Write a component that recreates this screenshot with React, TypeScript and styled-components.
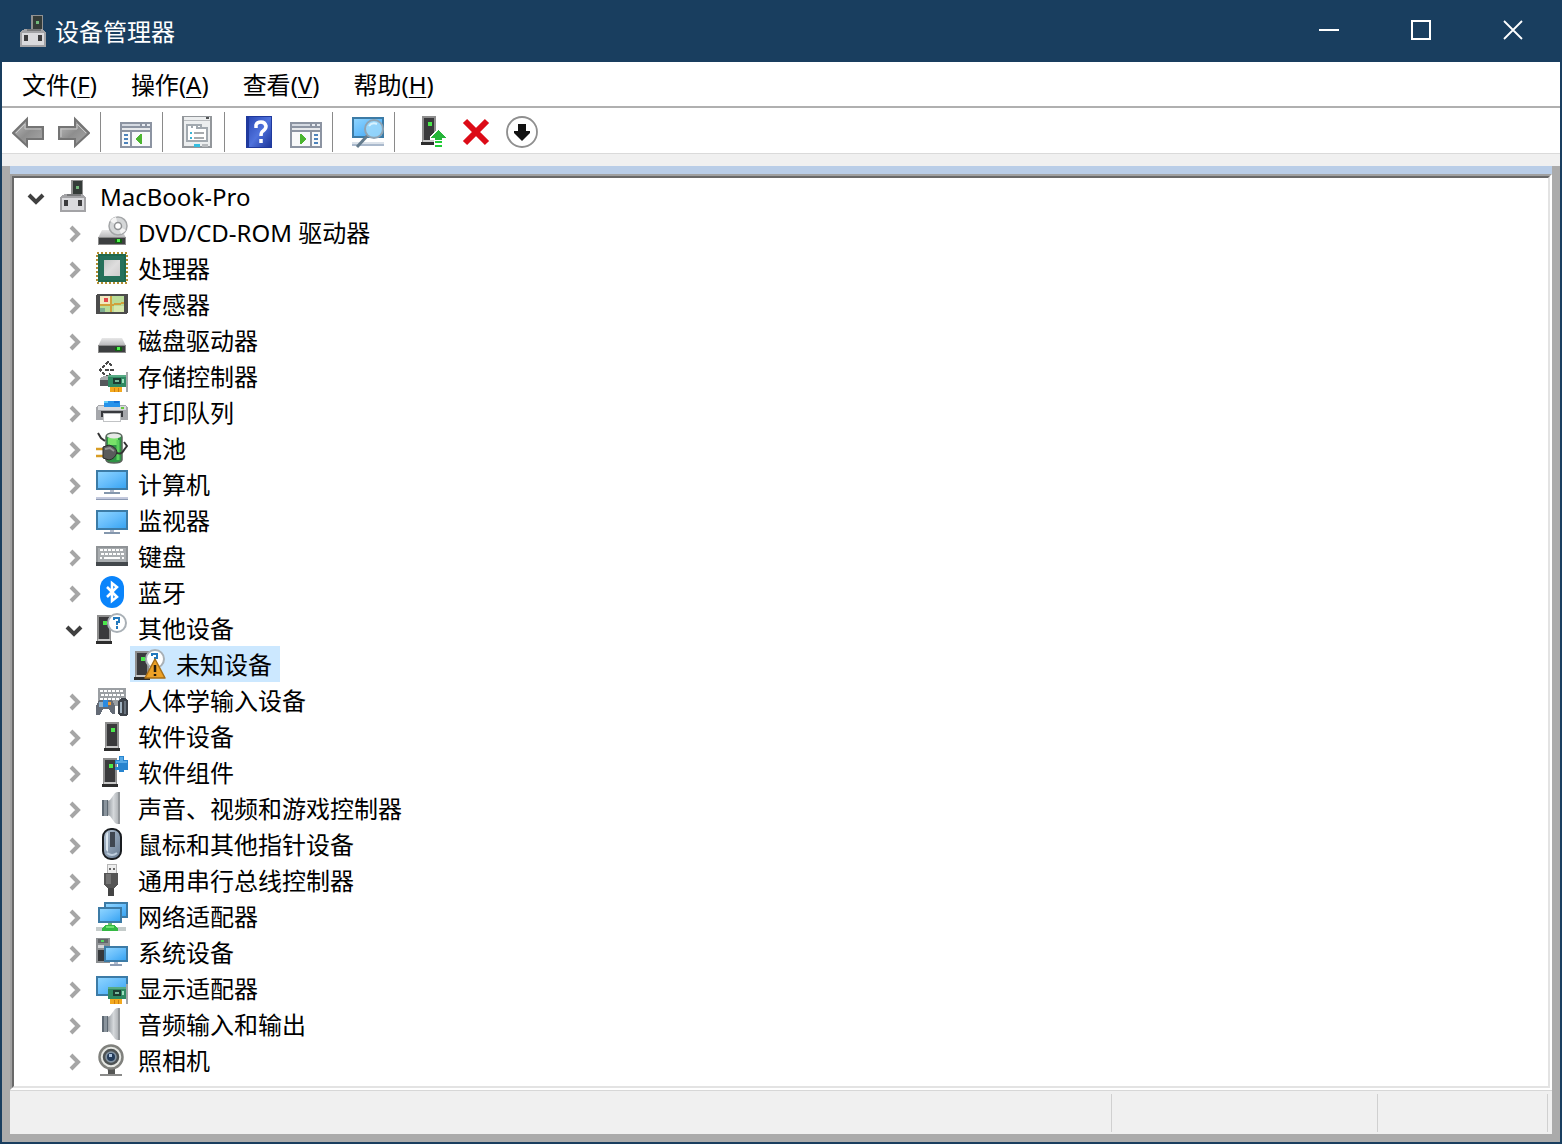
import React, { useState } from "react";
import styled, { createGlobalStyle } from "styled-components";

const GlobalStyle = createGlobalStyle`
  * { box-sizing: border-box; }
  body { margin: 0; background: #193e5f; }
  button { font: inherit; color: inherit; border: 0; background: none; padding: 0; margin: 0; }
`;

const Frame = styled.div`
  display: flex;
  flex-direction: column;
  min-height: 100vh;
  padding: 0 2px 2px;
  background: #193e5f;
  color: #000;
  font-family: "Noto Sans", "Noto Sans CJK SC", sans-serif;
  font-size: 24px;
  line-height: 34px;
`;

const TitleBar = styled.header`
  display: flex;
  align-items: center;
  gap: 5px;
  height: 62px;
  padding: 0 1px 0 16px;
  color: #fff;
`;

const Title = styled.h1`
  flex: 1;
  margin: 0;
  padding-top: 2px;
  font-size: 24px;
  font-weight: 400;
`;

const WindowControls = styled.div`
  display: flex;
  align-self: stretch;
`;

const WindowButton = styled.button`
  display: grid;
  place-items: center;
  width: 92px;
  height: 60px;
  &:hover { background: #31587b; }
`;

const MenuBar = styled.nav`
  display: flex;
  height: 46px;
  padding-left: 3px;
  background: #fff;
  border-bottom: 2px solid #b0b0b0;
`;

const MenuButton = styled.button`
  padding: 2px 17px 0;
  &:hover { background: #e5f3ff; }
`;

const AccessKey = styled.span`
  text-decoration: underline;
  text-decoration-thickness: 1px;
  text-underline-offset: 3px;
`;

const ToolBar = styled.div`
  display: flex;
  padding: 4px 3px 1px;
  background: #fff;
  border-bottom: 1px solid #dadada;
`;

const ToolButton = styled.button`
  display: grid;
  place-items: center;
  width: 46px;
  height: 40px;
  &:hover { background: #e5f3ff; }
`;

const Divider = styled.span`
  width: 1px;
  margin: 0 12px 0 3px;
  background: #8a8a8a;
`;

const Workspace = styled.div`
  display: flex;
  flex: 1;
  flex-direction: column;
  padding-top: 12px;
  background: #f0f0f0;
`;

const Client = styled.div`
  display: flex;
  flex: 1;
  flex-direction: column;
  border: solid #ababab;
  border-width: 0 8px 8px;
`;

const Caption = styled.div`
  height: 8px;
  background: #b9cde7;
`;

const OuterEdge = styled.main`
  display: flex;
  flex: 1;
  border: 2px solid;
  border-color: #a0a0a0 #fff #fff #a0a0a0;
`;

const TreePane = styled.div`
  flex: 1;
  padding-bottom: 8px;
  background: #fff;
  border: 2px solid;
  border-color: #696969 #e3e3e3 #e3e3e3 #696969;
`;

const Branch = styled.ul`
  margin: 0;
  padding: 0;
  list-style: none;
`;

const Row = styled.div<{ $level: number }>`
  display: flex;
  gap: 4px;
  height: 36px;
  padding-left: ${(p) => p.$level * 38 + 8}px;
`;

const Toggle = styled.button`
  display: grid;
  place-items: center;
  width: 28px;
  padding-top: 4px;
`;

const ToggleSpace = styled.span`
  width: 28px;
`;

const NodeButton = styled.button<{ $selected: boolean }>`
  display: flex;
  align-items: center;
  gap: 10px;
  padding: 0 8px 0 4px;
  white-space: nowrap;
  background: ${(p) => (p.$selected ? "#cce8ff" : "transparent")};
`;

const NodeLabel = styled.span`
  padding-top: 2px;
`;

const StatusBar = styled.footer`
  display: grid;
  grid-template-columns: 1fr 266px 170px;
  height: 44px;
  padding: 3px 4px 2px 0;
  background: #f0f0f0;
  border-top: 1px solid #d7d7d7;
`;

const StatusCell = styled.span`
  border-right: 1px solid #d0d0d0;
`;

const Svg = styled.svg`
  display: block;
  flex: none;
`;

const Defs = styled.svg`
  position: absolute;
`;

const Icon = ({ children, smooth }: { children: React.ReactNode; smooth?: boolean }) => (
  <Svg width="32" height="32" viewBox="0 0 32 32" shapeRendering={smooth ? "auto" : "crispEdges"} aria-hidden="true">
    {children}
  </Svg>
);

const Gradients = () => (
  <Defs width="0" height="0" aria-hidden="true">
    <defs>
      <linearGradient id="screen" x1="0" y1="0" x2="1" y2="1">
        <stop offset="0" stopColor="#8dd4ff" />
        <stop offset="0.5" stopColor="#66bdfb" />
        <stop offset="1" stopColor="#38a4f2" />
      </linearGradient>
      <linearGradient id="metal" x1="0" y1="0" x2="0" y2="1">
        <stop offset="0" stopColor="#e8e8e8" />
        <stop offset="1" stopColor="#b4b4b6" />
      </linearGradient>
      <linearGradient id="die" x1="0" y1="0" x2="1" y2="1">
        <stop offset="0" stopColor="#c4c6c5" />
        <stop offset="0.5" stopColor="#dedddd" />
        <stop offset="1" stopColor="#cfcdcd" />
      </linearGradient>
      <linearGradient id="arrow" x1="0" y1="0" x2="1" y2="1">
        <stop offset="0" stopColor="#c2c2c2" />
        <stop offset="0.5" stopColor="#8e8e8e" />
        <stop offset="1" stopColor="#a9a9a9" />
      </linearGradient>
      <linearGradient id="cone" x1="0" y1="0" x2="1" y2="0">
        <stop offset="0" stopColor="#8f959b" />
        <stop offset="0.5" stopColor="#d5d8db" />
        <stop offset="1" stopColor="#a3a7ab" />
      </linearGradient>
      <linearGradient id="help" x1="0" y1="0" x2="1" y2="1">
        <stop offset="0" stopColor="#2b49b5" />
        <stop offset="0.5" stopColor="#4f72dc" />
        <stop offset="1" stopColor="#1c369b" />
      </linearGradient>
      <linearGradient id="mouse" x1="0" y1="0" x2="1" y2="1">
        <stop offset="0" stopColor="#b4c3d4" />
        <stop offset="1" stopColor="#64788f" />
      </linearGradient>
    </defs>
  </Defs>
);

const Screen = ({ x = 0, y = 0, w = 32, h = 20 }: { x?: number; y?: number; w?: number; h?: number }) => (
  <>
    <rect x={x} y={y} width={w} height={h} fill="#3c7ba6" />
    <rect x={x + 2} y={y + 2} width={w - 4} height={h - 4} fill="url(#screen)" />
  </>
);

const Tower = ({ x = 0, y = 0, w = 14 }: { x?: number; y?: number; w?: number }) => (
  <>
    <rect x={x} y={y} width={w} height={26} fill="#8e8e8e" />
    <rect x={x + 2} y={y + 2} width={w - 4} height={24} fill="#3a3a3c" />
    <rect x={x + w / 2 - 1} y={y + 6} width={4} height={4} fill="#4be84b" />
    <rect x={x + 1} y={y + 24} width={w - 2} height={2} fill="#c8c8c8" />
    <rect x={x - 1} y={y + 26} width={w + 2} height={3} fill="#2d2d2d" />
  </>
);

const Drive = () => (
  <>
    <path d="M6 14H26L30 22H2Z" fill="url(#metal)" />
    <rect x="2" y="21" width="28" height="8" fill="#8b8b8b" />
    <rect x="3" y="22" width="26" height="6" fill="#3d3f40" />
    <rect x="19" y="23" width="7" height="4" fill="#126012" />
    <rect x="21" y="23" width="3" height="3" fill="#4cf04c" />
  </>
);

const Card = () => (
  <>
    <rect x="30" y="12" width="2" height="20" fill="#a3a6a8" />
    <rect x="12" y="15" width="18" height="12" fill="#2f8a63" />
    <rect x="12" y="15" width="18" height="2" fill="#58ab85" />
    <rect x="17" y="18" width="8" height="6" fill="#1d3c33" />
    <rect x="19" y="20" width="4" height="2" fill="#77b79b" />
    <rect x="26" y="19" width="2" height="4" fill="#9fe0bf" />
    <rect x="14" y="27" width="12" height="5" fill="#f3a81d" />
    <path d="M18 28V32M22 28V32" stroke="#cf7d0d" />
  </>
);

const Bubble = () => (
  <>
    <circle cx="21" cy="11" r="9" fill="#fff" stroke="#a9b0b6" strokeWidth="2" />
    <path d="M18 8V6H23V10H21V13M21 14V17" fill="none" stroke="#2379bd" strokeWidth="2" />
  </>
);

const Keys = ({ x, y, cols, rows }: { x: number; y: number; cols: number; rows: number }) => (
  <>
    {Array.from({ length: cols * rows }, (_, i) => {
      const row = Math.floor(i / cols);
      return <rect key={i} x={x + (i % cols) * 4 + (row % 2)} y={y + row * 4} width="3" height="2" fill="#fff" />;
    })}
  </>
);

const Speaker = () => (
  <Icon smooth>
    <path d="M11 9L14 8L19 1L21 0H24V32H21L19 31L14 24L11 23Z" fill="url(#cone)" />
    <path d="M6 8H12V24H6Z" fill="#5d6872" />
    <path d="M8 8H11V24H8Z" fill="#8a949d" />
    <path d="M22 0H24V32H22Z" fill="#92969a" />
  </Icon>
);

const icons = {
  manager: (
    <Icon>
      <rect x="13" y="0" width="12" height="15" fill="#929292" />
      <rect x="15" y="1" width="9" height="13" fill="#343b38" />
      <rect x="18" y="6" width="3" height="3" fill="#71b97a" />
      <path d="M8 14H24L28 18V32H2V18L4 15Z" fill="#a3a3a6" />
      <path d="M9 14H23V16H9Z" fill="#77787a" />
      <path d="M4 18H26V30H4Z" fill="#dadadd" />
      <rect x="6" y="20" width="4" height="6" fill="#3c3c3e" />
      <rect x="20" y="20" width="4" height="6" fill="#3c3c3e" />
    </Icon>
  ),
  dvd: (
    <Icon smooth>
      <Drive />
      <circle cx="22" cy="10" r="9" fill="#d5d7d8" stroke="#a4a6a8" strokeWidth="1.5" />
      <path d="M22 10L14 5A9 9 0 0 1 20 1ZM22 10L30 14A9 9 0 0 1 25 18Z" fill="#f4f4f4" />
      <circle cx="22" cy="10" r="3.5" fill="#fff" stroke="#909294" strokeWidth="1.5" />
    </Icon>
  ),
  cpu: (
    <Icon>
      <rect x="1" y="1" width="30" height="30" fill="none" stroke="#b28e32" strokeWidth="2" strokeDasharray="2 2" />
      <rect x="2" y="2" width="28" height="28" fill="#1f694e" />
      <rect x="4" y="4" width="24" height="24" fill="#26705a" />
      <rect x="8" y="8" width="16" height="16" fill="url(#die)" />
    </Icon>
  ),
  sensor: (
    <Icon>
      <rect x="0" y="6" width="32" height="20" rx="2" fill="#4c4c4c" />
      <rect x="4" y="8" width="24" height="16" fill="#b9dc98" />
      <rect x="4" y="8" width="11" height="8" fill="#f1e9bf" />
      <path d="M4 17H15L28 15M15 8V24" fill="none" stroke="#d1a13c" strokeWidth="2" />
      <rect x="18" y="18" width="10" height="6" fill="#d7e9ad" />
      <rect x="8" y="10" width="4" height="4" fill="#e3474c" />
      <rect x="4" y="20" width="5" height="4" fill="#7cac91" />
    </Icon>
  ),
  disk: (
    <Icon smooth>
      <Drive />
    </Icon>
  ),
  storage: (
    <Icon>
      <path d="M16 6L12 2L4 10L11 17L14 14M9 10H18" fill="none" stroke="#494949" strokeWidth="2.5" strokeDasharray="4 1" />
      <path d="M4 18H16V26H4Z" fill="#54585c" />
      <path d="M4 18L8 16H16V20H4Z" fill="#a8abad" />
      <Card />
    </Icon>
  ),
  printer: (
    <Icon>
      <rect x="8" y="5" width="16" height="8" fill="#2592ea" />
      <rect x="8" y="5" width="4" height="5" fill="#62cdf7" />
      <rect x="18" y="5" width="5" height="5" fill="#1171d6" />
      <path d="M2 9H30L32 12V24H0V12Z" fill="#a5a7ab" />
      <rect x="2" y="10" width="28" height="4" fill="#d7d9dc" />
      <rect x="8" y="7" width="16" height="4" fill="#2592ea" />
      <rect x="25" y="11" width="3" height="2" fill="#65c83d" />
      <rect x="5" y="15" width="22" height="6" fill="#37393d" />
      <rect x="7" y="17" width="18" height="9" fill="#c1c3c5" />
      <rect x="8" y="18" width="16" height="7" fill="#fff" />
    </Icon>
  ),
  battery: (
    <Icon smooth>
      <path d="M10 5Q10 1 18 1T26 5V28Q25 31 18 31T10 28Z" fill="#2f9445" stroke="#59645b" strokeWidth="1.5" />
      <path d="M12 6H22V13H12Z" fill="#78e269" />
      <ellipse cx="18" cy="4" rx="7" ry="2.5" fill="#e6e8e6" />
      <path d="M22 8V28" stroke="#5bd05c" strokeWidth="3" />
      <path d="M2 1L5 6L9 9M19 20Q25 24 28 18L31 14L28 10" fill="none" stroke="#333" strokeWidth="2" />
      <path d="M0 17H8M0 24H8" stroke="#d89d24" strokeWidth="2.5" />
      <path d="M7 15L13 13Q20 15 21 20Q19 27 13 28L7 26Z" fill="#5a5b5c" stroke="#2c2c2c" />
      <path d="M9 17L14 16L18 19" fill="none" stroke="#979797" strokeWidth="2" />
    </Icon>
  ),
  computer: (
    <Icon>
      <Screen y={2} h={20} />
      <rect x="14" y="22" width="4" height="2" fill="#b3bccd" />
      <rect x="8" y="24" width="16" height="2" fill="#8497ad" />
      <rect x="0" y="29" width="32" height="2" fill="#c3c9dd" />
      <rect x="0" y="31" width="32" height="1" fill="#8c9ab4" />
    </Icon>
  ),
  monitor: (
    <Icon>
      <Screen y={6} h={20} />
      <rect x="14" y="26" width="4" height="2" fill="#b3bccd" />
      <rect x="8" y="28" width="16" height="2" fill="#8497ad" />
    </Icon>
  ),
  keyboard: (
    <Icon>
      <rect x="0" y="6" width="32" height="20" fill="#8f9396" />
      <rect x="2" y="8" width="28" height="14" fill="#a9adb0" />
      <Keys x={4} y={9} cols={6} rows={2} />
      <path d="M4 18H6M8 18H24M26 18H28" stroke="#fff" strokeWidth="2" />
      <rect x="0" y="22" width="32" height="4" fill="#43484c" />
    </Icon>
  ),
  bluetooth: (
    <Icon smooth>
      <rect x="4" y="0" width="24" height="32" rx="12" fill="#0a84fb" />
      <path d="M11 11L21 21L16 25V7L21 11L11 21" fill="none" stroke="#fff" strokeWidth="2.5" />
    </Icon>
  ),
  other: (
    <Icon smooth>
      <Tower x={1} y={3} w={14} />
      <Bubble />
    </Icon>
  ),
  unknown: (
    <Icon smooth>
      <Tower x={1} y={3} w={14} />
      <Bubble />
      <path d="M21 11L31 30H11Z" fill="#eda126" stroke="#a76f19" strokeWidth="1.5" strokeLinejoin="round" />
      <path d="M21 17V24M21 26V28" stroke="#241b0c" strokeWidth="2.5" />
    </Icon>
  ),
  hid: (
    <Icon>
      <rect x="2" y="4" width="28" height="18" fill="#9b9fa3" />
      <Keys x={4} y={6} cols={6} rows={3} />
      <path d="M3 16H16L19 22V30H16L13 25H7L4 31H0V22Z" fill="#646b76" />
      <rect x="3" y="18" width="4" height="5" fill="#8eafc9" />
      <rect x="7" y="16" width="5" height="7" fill="#2b8ae0" />
      <rect x="12" y="18" width="3" height="3" fill="#ef9b36" />
      <path d="M22 18L25 14H30L32 17V30L30 32H24L22 29Z" fill="#3c4149" />
      <rect x="24" y="18" width="2" height="11" fill="#9eb0bf" />
      <rect x="28" y="17" width="2" height="13" fill="#68727d" />
    </Icon>
  ),
  software: (
    <Icon>
      <Tower x={9} y={2} />
    </Icon>
  ),
  component: (
    <Icon>
      <Tower x={7} y={2} />
      <path d="M19 4H23V0H28V4H32V14H28V16H23V14H19V11H22V8H19Z" fill="#2784cf" />
      <path d="M20 5H24V1H27V5H31V7H20Z" fill="#56a9e6" />
    </Icon>
  ),
  mouse: (
    <Icon smooth>
      <rect x="7" y="1" width="18" height="30" rx="8" fill="url(#mouse)" stroke="#191c20" strokeWidth="2" />
      <path d="M10 8Q10 5 12 4V24L10 22Z" fill="#dce7f0" />
      <rect x="14" y="4" width="5" height="15" fill="#3f4650" />
      <path d="M11 25Q16 29 21 25" fill="none" stroke="#bdcddd" strokeWidth="2" />
    </Icon>
  ),
  usb: (
    <Icon>
      <rect x="11" y="0" width="10" height="10" fill="#b5b5b5" />
      <rect x="12" y="1" width="8" height="8" fill="#ededed" />
      <rect x="13" y="4" width="2" height="2" fill="#666" />
      <rect x="17" y="4" width="2" height="2" fill="#666" />
      <path d="M8 9H22V20L19 24H11L8 20Z" fill="#555" />
      <rect x="10" y="10" width="5" height="10" fill="#747474" />
      <rect x="12" y="24" width="6" height="8" fill="#444" />
    </Icon>
  ),
  network: (
    <Icon>
      <Screen x={8} y={2} w={24} h={16} />
      <Screen x={2} y={7} w={24} h={16} />
      <rect x="0" y="27" width="30" height="4" fill="#c5cccb" />
      <rect x="12" y="23" width="4" height="4" fill="#75bd72" />
      <path d="M9 25H19L22 29V31H6V29Z" fill="#35b944" />
      <rect x="10" y="26" width="8" height="2" fill="#70e16f" />
    </Icon>
  ),
  system: (
    <Icon>
      <rect x="0" y="2" width="14" height="25" fill="#8c8f92" />
      <rect x="2" y="3" width="10" height="4" fill="#626669" />
      <rect x="5" y="4" width="3" height="2" fill="#54d760" />
      <rect x="2" y="9" width="6" height="3" fill="#d3d5d7" />
      <rect x="2" y="14" width="6" height="11" fill="#36393c" />
      <Screen x={8} y={10} w={24} h={16} />
      <rect x="18" y="26" width="4" height="2" fill="#b3bccd" />
      <rect x="14" y="28" width="12" height="2" fill="#8c9cb4" />
    </Icon>
  ),
  display: (
    <Icon>
      <Screen y={4} h={20} />
      <Card />
    </Icon>
  ),
  speaker: <Speaker />,
  camera: (
    <Icon smooth>
      <path d="M11 22H19V30H12V27Z" fill="#555654" />
      <path d="M4 31H26" stroke="#8a8a89" strokeWidth="2" />
      <circle cx="15" cy="13" r="11.5" fill="#e6e8e4" stroke="#80817d" strokeWidth="2.5" />
      <circle cx="15" cy="13" r="7" fill="#8494a2" stroke="#4e5354" strokeWidth="2.5" />
      <circle cx="15" cy="13" r="4" fill="#243c5a" />
      <rect x="13" y="10" width="3" height="3" fill="#adc4df" />
    </Icon>
  ),
};

const ConsoleWindow = ({ mirrored = false }: { mirrored?: boolean }) => (
  <Icon>
    <rect x="0" y="6" width="32" height="26" fill="#8c94a2" />
    <rect x="2" y="8" width="18" height="2" fill="#d5dae2" />
    <rect x="22" y="8" width="3" height="2" fill="#e9edf3" />
    <rect x="27" y="8" width="3" height="2" fill="#e9edf3" />
    <rect x="2" y="12" width="28" height="2" fill="#e7e9ec" />
    <rect x="2" y="16" width="28" height="14" fill="#f8f9fa" />
    <g transform={mirrored ? "translate(32 0) scale(-1 1)" : undefined}>
      <rect x="10" y="16" width="2" height="14" fill="#8c94a2" />
      <path d="M4 19H8M4 23H8M4 27H8" stroke="#4d83bb" strokeWidth="2" />
      <path d="M16 23L20 18H22V28H20Z" fill="#4bb52f" />
    </g>
  </Icon>
);

const tools = {
  back: (
    <Icon smooth>
      <path d="M1 17L15 3V11H31V23H15V30Z" fill="url(#arrow)" stroke="#747474" strokeWidth="2" />
      <path d="M4 17L13 8V13H29" fill="none" stroke="#c8c8c8" />
    </Icon>
  ),
  forward: (
    <Icon smooth>
      <path d="M31 17L17 3V11H1V23H17V30Z" fill="url(#arrow)" stroke="#747474" strokeWidth="2" />
      <path d="M3 21V13H19V8L28 17" fill="none" stroke="#c8c8c8" />
    </Icon>
  ),
  properties: (
    <Icon>
      <rect x="0" y="0" width="30" height="32" fill="#93979b" />
      <rect x="2" y="1" width="26" height="29" fill="#eceeef" />
      <rect x="2" y="4" width="26" height="1" fill="#b9bcbf" />
      <rect x="24" y="1" width="3" height="2" fill="#4f5153" />
      <path d="M5 9H19V12H25V25H5Z" fill="#fff" stroke="#a2a9af" strokeWidth="2" />
      <path d="M10 9V12M15 9V12H19" fill="none" stroke="#a2a9af" strokeWidth="2" />
      <path d="M12 17H22M12 22H22" stroke="#a7abae" strokeWidth="2" />
      <path d="M8 17H10M8 22H10" stroke="#3ab4d5" strokeWidth="2" />
      <rect x="12" y="28" width="6" height="3" fill="#35bddf" />
      <rect x="20" y="28" width="6" height="3" fill="#b7babd" />
    </Icon>
  ),
  help: (
    <Icon smooth>
      <rect x="2" y="0" width="26" height="32" fill="#1f399d" />
      <rect x="5" y="1" width="22" height="30" fill="url(#help)" />
      <path d="M12 12V9Q13 6 17 6T22 10Q22 13 19 15Q17 16 17 20M17 23V27" fill="none" stroke="#fff" strokeWidth="3.5" />
    </Icon>
  ),
  scan: (
    <Icon smooth>
      <Screen y={1} h={21} />
      <rect x="0" y="28" width="32" height="2" fill="#aab9cc" />
      <rect x="0" y="26" width="32" height="2" fill="#dbe2ea" />
      <path d="M16 19L5 31" stroke="#657c8d" strokeWidth="3" />
      <circle cx="22" cy="13" r="9" fill="#a3dcfb" fillOpacity=".8" stroke="#8fa3b2" strokeWidth="2" />
      <path d="M17 10Q20 6 25 8" fill="none" stroke="#d8f2ff" strokeWidth="2" />
    </Icon>
  ),
  update: (
    <Icon>
      <Tower x={8} y={0} w={14} />
      <path d="M24 12L32 20V23H28V32H20V24H16V20Z" fill="#fff" />
      <path d="M24 14L32 21V22H28V24H21V22H17V21Z" fill="#26b53a" />
      <path d="M21 26H28M21 30H28" stroke="#20cc35" strokeWidth="2" />
    </Icon>
  ),
  remove: (
    <Icon smooth>
      <path d="M5 5L27 27M27 5L5 27" stroke="#dc0b17" strokeWidth="6" />
    </Icon>
  ),
  install: (
    <Icon smooth>
      <circle cx="16" cy="16" r="15" fill="#fff" stroke="#8f8f8f" strokeWidth="1.8" />
      <path d="M12 8H20V15H24V17L16 25L8 17V15H12Z" fill="#111" />
    </Icon>
  ),
};

const toolGroups = [
  [
    { name: "后退", icon: tools.back },
    { name: "前进", icon: tools.forward },
  ],
  [{ name: "显示/隐藏控制台树", icon: <ConsoleWindow /> }],
  [{ name: "属性", icon: tools.properties }],
  [
    { name: "帮助", icon: tools.help },
    { name: "显示/隐藏操作窗格", icon: <ConsoleWindow mirrored /> },
  ],
  [{ name: "扫描检测硬件改动", icon: tools.scan }],
  [
    { name: "更新驱动程序", icon: tools.update },
    { name: "卸载设备", icon: tools.remove },
    { name: "禁用设备", icon: tools.install },
  ],
];

const menus = [
  ["文件", "F"],
  ["操作", "A"],
  ["查看", "V"],
  ["帮助", "H"],
];

type DeviceNode = { label: string; icon: keyof typeof icons; children?: DeviceNode[] };

const root: DeviceNode = {
  label: "MacBook-Pro",
  icon: "manager",
  children: [
    { label: "DVD/CD-ROM 驱动器", icon: "dvd", children: [] },
    { label: "处理器", icon: "cpu", children: [] },
    { label: "传感器", icon: "sensor", children: [] },
    { label: "磁盘驱动器", icon: "disk", children: [] },
    { label: "存储控制器", icon: "storage", children: [] },
    { label: "打印队列", icon: "printer", children: [] },
    { label: "电池", icon: "battery", children: [] },
    { label: "计算机", icon: "computer", children: [] },
    { label: "监视器", icon: "monitor", children: [] },
    { label: "键盘", icon: "keyboard", children: [] },
    { label: "蓝牙", icon: "bluetooth", children: [] },
    { label: "其他设备", icon: "other", children: [{ label: "未知设备", icon: "unknown" }] },
    { label: "人体学输入设备", icon: "hid", children: [] },
    { label: "软件设备", icon: "software", children: [] },
    { label: "软件组件", icon: "component", children: [] },
    { label: "声音、视频和游戏控制器", icon: "speaker", children: [] },
    { label: "鼠标和其他指针设备", icon: "mouse", children: [] },
    { label: "通用串行总线控制器", icon: "usb", children: [] },
    { label: "网络适配器", icon: "network", children: [] },
    { label: "系统设备", icon: "system", children: [] },
    { label: "显示适配器", icon: "display", children: [] },
    { label: "音频输入和输出", icon: "speaker", children: [] },
    { label: "照相机", icon: "camera", children: [] },
  ],
};

const Chevron = ({ open }: { open: boolean }) => (
  <Svg width="20" height="20" viewBox="0 0 20 20" fill="none" strokeWidth="4" aria-hidden="true">
    {open ? <path d="M3 7L10 14L17 7" stroke="#404040" /> : <path d="M7 3L14 10L7 17" stroke="#a6a6a6" />}
  </Svg>
);

type TreeItemProps = {
  node: DeviceNode;
  level: number;
  selected: string;
  onSelect: (label: string) => void;
};

const TreeItem = ({ node, level, selected, onSelect }: TreeItemProps) => {
  const [open, setOpen] = useState(Boolean(node.children?.length));
  return (
    <li>
      <Row $level={level}>
        {node.children ? (
          <Toggle aria-label={`展开或折叠 ${node.label}`} aria-expanded={open} onClick={() => setOpen(!open)}>
            <Chevron open={open} />
          </Toggle>
        ) : (
          <ToggleSpace />
        )}
        <NodeButton $selected={selected === node.label} onClick={() => onSelect(node.label)}>
          {icons[node.icon]}
          <NodeLabel>{node.label}</NodeLabel>
        </NodeButton>
      </Row>
      {open && node.children && (
        <Branch>
          {node.children.map((child) => (
            <TreeItem key={child.label} node={child} level={level + 1} selected={selected} onSelect={onSelect} />
          ))}
        </Branch>
      )}
    </li>
  );
};

export default function App() {
  const [selected, setSelected] = useState("未知设备");
  return (
    <Frame lang="zh-CN">
      <GlobalStyle />
      <Gradients />
      <TitleBar>
        {icons.manager}
        <Title>设备管理器</Title>
        <WindowControls>
          <WindowButton aria-label="最小化">
            <Svg width="20" height="20" stroke="#fff" strokeWidth="2">
              <path d="M0 10H20" />
            </Svg>
          </WindowButton>
          <WindowButton aria-label="最大化">
            <Svg width="20" height="20" stroke="#fff" strokeWidth="2" fill="none">
              <path d="M1 1H19V19H1Z" />
            </Svg>
          </WindowButton>
          <WindowButton aria-label="关闭">
            <Svg width="20" height="20" stroke="#fff" strokeWidth="1.8">
              <path d="M1 1L19 19M19 1L1 19" />
            </Svg>
          </WindowButton>
        </WindowControls>
      </TitleBar>
      <MenuBar aria-label="菜单">
        {menus.map(([label, key]) => (
          <MenuButton key={key}>
            {label}(<AccessKey>{key}</AccessKey>)
          </MenuButton>
        ))}
      </MenuBar>
      <ToolBar role="toolbar">
        {toolGroups.map((group, i) => (
          <React.Fragment key={group[0].name}>
            {i > 0 && <Divider />}
            {group.map((tool) => (
              <ToolButton key={tool.name} aria-label={tool.name}>
                {tool.icon}
              </ToolButton>
            ))}
          </React.Fragment>
        ))}
      </ToolBar>
      <Workspace>
        <Client>
          <Caption />
          <OuterEdge>
            <TreePane>
              <Branch>
                <TreeItem node={root} level={0} selected={selected} onSelect={setSelected} />
              </Branch>
            </TreePane>
          </OuterEdge>
          <StatusBar>
            <StatusCell />
            <StatusCell />
            <StatusCell />
          </StatusBar>
        </Client>
      </Workspace>
    </Frame>
  );
}
